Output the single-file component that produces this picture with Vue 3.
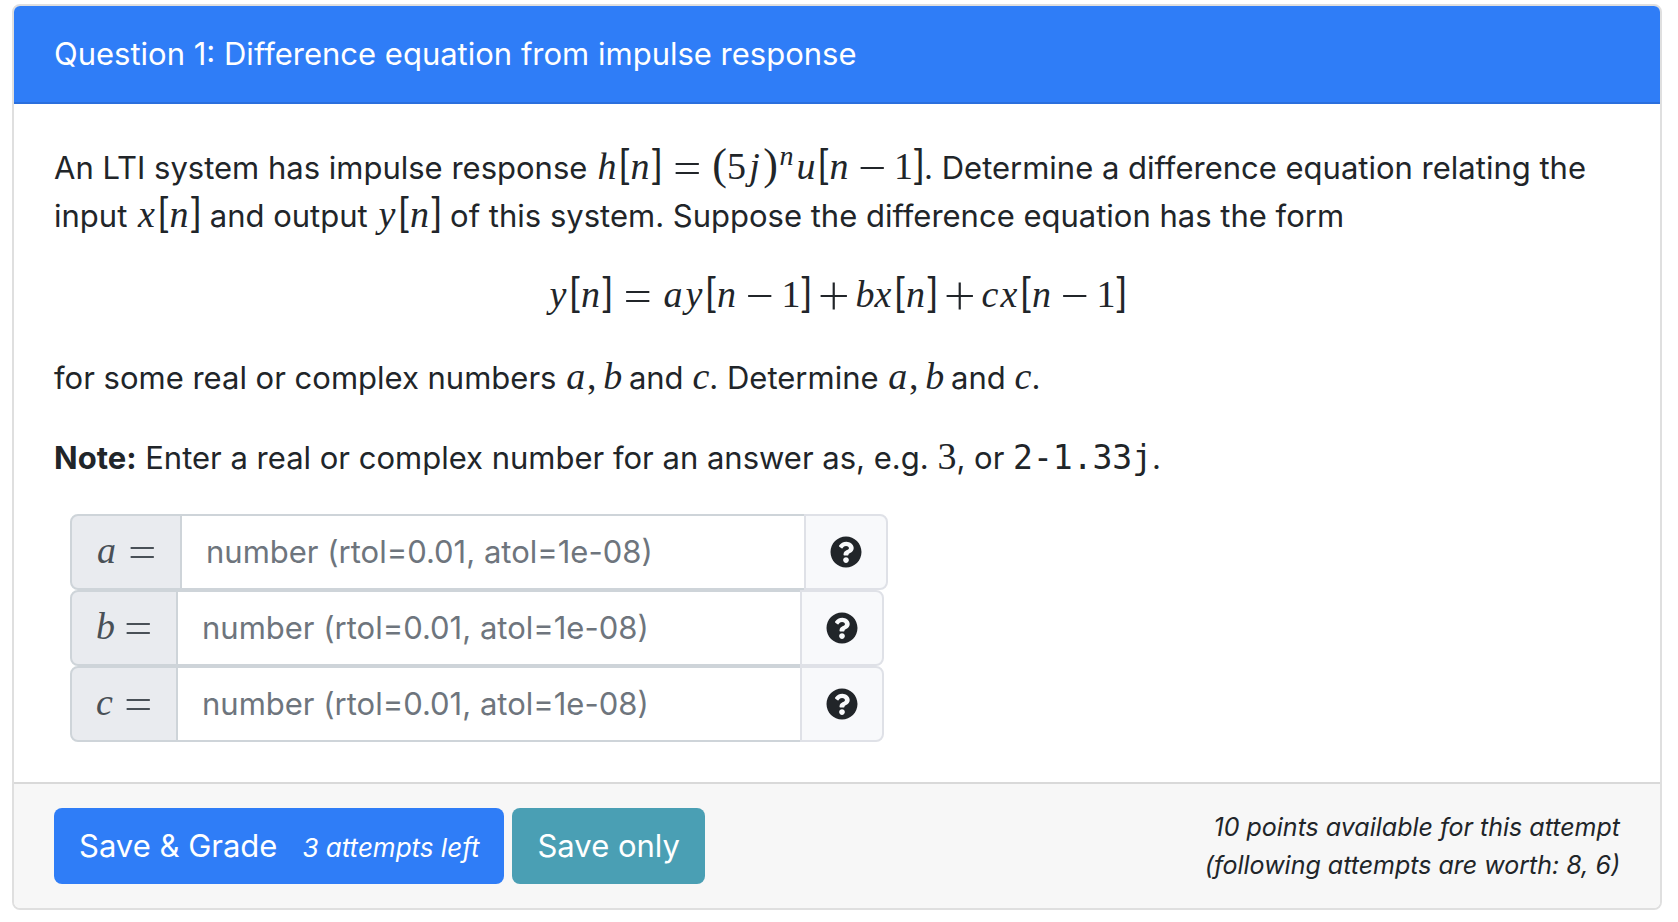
<script setup>
import { h, reactive } from 'vue'

const kinds = {
  '[': 'bracket', ']': 'bracket', '(': 'fence', ')': 'fence',
  '=': 'op rel', '+': 'op bin', '−': 'op bin', ',': 'comma',
  '1': 'digit', '3': 'digit', '5': 'digit',
  a: 'mid', y: 'mid', x: 'mid', b: 'slim', c: 'slim', j: 'slim',
  n: 'wide', h: 'wide', u: 'wide'
}

// Renders a short formula; a letter after "^" becomes a superscript.
const Formula = (props) => {
  const out = []
  const chars = [...props.tex]
  for (let i = 0; i < chars.length; i++) {
    if (chars[i] === '^') {
      out.push(h('sup', { class: 'power' }, chars[++i]))
    } else {
      out.push(h('span', { class: ['sym', kinds[chars[i]]] }, chars[i]))
    }
  }
  return h('span', { class: 'formula' }, out)
}
Formula.props = ['tex']

const names = ['a', 'b', 'c']
const answers = reactive({ a: '', b: '', c: '' })
</script>

<template>
  <main class="page">
    <form class="card" @submit.prevent>
      <header class="card-header">Question 1: Difference equation from impulse response</header>

      <div class="card-body">
        <p>
          An LTI system has impulse response <Formula tex="h[n]=(5j)^nu[n−1]" />. Determine a difference
          equation relating the input <Formula tex="x[n]" /> and output <Formula tex="y[n]" /> of this
          system. Suppose the difference equation has the form
        </p>
        <div class="display"><Formula tex="y[n]=ay[n−1]+bx[n]+cx[n−1]" /></div>
        <p>
          for some real or complex numbers <Formula tex="a,b" /> and <Formula tex="c" />. Determine
          <Formula tex="a,b" /> and <Formula tex="c" />.
        </p>
        <p>
          <strong>Note:</strong> Enter a real or complex number for an answer as, e.g.
          <Formula tex="3" />, or <code>2-1.33j</code>.
        </p>

        <div class="answers">
          <div v-for="name in names" :key="name" class="input-group">
            <label class="prefix" :for="'answer-' + name"><Formula :tex="name + '='" /></label>
            <input
              :id="'answer-' + name"
              v-model="answers[name]"
              class="field"
              type="text"
              placeholder="number (rtol=0.01, atol=1e-08)"
            />
            <button class="help" type="button" :aria-label="'Help for ' + name">
              <svg viewBox="0 0 512 512" aria-hidden="true">
                <path
                  d="M504 256c0 136.997-111.043 248-248 248S8 392.997 8 256C8 119.083 119.043 8 256 8s248 111.083 248 248zM262.655 90c-54.497 0-89.255 22.957-116.549 63.758-3.536 5.286-2.353 12.415 2.715 16.258l34.699 26.31c5.205 3.947 12.621 3.008 16.665-2.122 17.864-22.658 30.113-35.797 57.303-35.797 20.429 0 45.698 13.148 45.698 32.958 0 14.976-12.363 22.667-32.534 33.976C247.128 238.528 216 254.941 216 296v4c0 6.627 5.373 12 12 12h56c6.627 0 12-5.373 12-12v-1.333c0-28.462 83.186-29.647 83.186-106.667 0-58.002-60.165-102-116.531-102zM256 338c-25.365 0-46 20.635-46 46 0 25.364 20.635 46 46 46s46-20.636 46-46c0-25.365-20.635-46-46-46z"
                />
              </svg>
            </button>
          </div>
        </div>
      </div>

      <footer class="card-footer">
        <div class="actions">
          <button class="btn primary" type="submit">
            Save &amp; Grade <small>3 attempts left</small>
          </button>
          <button class="btn info" type="button">Save only</button>
        </div>
        <div class="points">
          10 points available for this attempt<br />
          (following attempts are worth: 8, 6)
        </div>
      </footer>
    </form>
  </main>
</template>

<style>
body {
  background: #fff;
}
.formula {
  white-space: nowrap;
  font-family: "Liberation Serif", serif;
  font-size: 38px;
  line-height: 0;
}
.formula .sym {
  display: inline-block;
  text-align: center;
}
.formula .digit {
  width: 19px;
}
.formula .mid {
  width: 21px;
  font-style: italic;
}
.formula .slim {
  width: 17px;
  font-style: italic;
}
.formula .wide {
  width: 22px;
  font-style: italic;
}
.formula .fence {
  width: 15px;
  font-size: 44px;
}
.formula .bracket {
  width: 11px;
  font-family: Lato, sans-serif;
  font-size: 40px;
  font-weight: 400;
}
.formula .comma {
  width: 11px;
  margin-right: 6px;
}
.formula .op {
  width: 32px;
  font-family: Lato, sans-serif;
  font-size: 56px;
  font-weight: 300;
  vertical-align: -8px;
}
.formula .rel {
  margin: 0 9px;
}
.formula .bin {
  margin: 0 6px;
}
.formula .power {
  display: inline-block;
  width: 17px;
  font-size: 28px;
  font-style: italic;
  text-align: center;
  vertical-align: 14px;
}
</style>

<style scoped>
.page {
  padding: 4px 16px 12px 12px;
  font-family: Inter, sans-serif;
  font-size: 31px;
  line-height: 48px;
  color: #212529;
}
.card {
  border: 2px solid #dfdfdf;
  border-radius: 8px;
  overflow: hidden;
  background: #fff;
}
.card-header {
  padding: 24px 40px;
  border-bottom: 2px solid #2a6fdd;
  background: #2f7df7;
  color: #fff;
}
.card-body {
  padding: 40px;
}
p {
  margin: 0 0 32px;
}
.display {
  margin: 32px 0;
  text-align: center;
  min-height: 50px;
}
strong {
  font-weight: 700;
}
code {
  font-family: "DejaVu Sans Mono", monospace;
  font-size: 33px;
  line-height: 0;
}
.answers {
  padding: 0 16px;
}
.input-group {
  display: flex;
  height: 76px;
}
.prefix {
  box-sizing: border-box;
  flex: none;
  padding: 12px 13px 12px 24px;
  border: 2px solid #ced4d9;
  border-radius: 8px 0 0 8px;
  background: #e9ebef;
  color: #495057;
}
.field {
  box-sizing: border-box;
  width: 626px;
  min-width: 0;
  margin: 0 0 0 -2px;
  padding: 0 24px;
  border: 2px solid #ced4d9;
  border-radius: 0;
  background: #fff;
  color: #495057;
  font: inherit;
}
.field::placeholder {
  color: #6e757d;
  opacity: 1;
}
.help {
  position: relative;
  box-sizing: border-box;
  flex: none;
  display: flex;
  align-items: center;
  justify-content: center;
  width: 84px;
  margin: 0 0 0 -2px;
  padding: 0;
  border: 2px solid #dfe1e7;
  border-radius: 0 8px 8px 0;
  background: #f8f9fb;
  color: #212529;
}
.help svg {
  width: 32px;
  height: 32px;
  fill: currentColor;
}
.card-footer {
  display: flex;
  align-items: center;
  justify-content: space-between;
  padding: 24px 40px;
  border-top: 2px solid #d9d9d9;
  background: #f7f7f7;
}
.actions {
  display: flex;
  gap: 8px;
}
.btn {
  display: flex;
  align-items: baseline;
  gap: 25px;
  padding: 14px 25px;
  border: 0;
  border-radius: 8px;
  color: #fff;
  font: inherit;
}
.btn small {
  font-size: 26px;
  font-style: italic;
  line-height: 38px;
}
.primary {
  background: #2f7df7;
}
.info {
  background: #4a9fb4;
}
.points {
  font-size: 25px;
  font-style: italic;
  line-height: 38px;
  text-align: right;
}
</style>
